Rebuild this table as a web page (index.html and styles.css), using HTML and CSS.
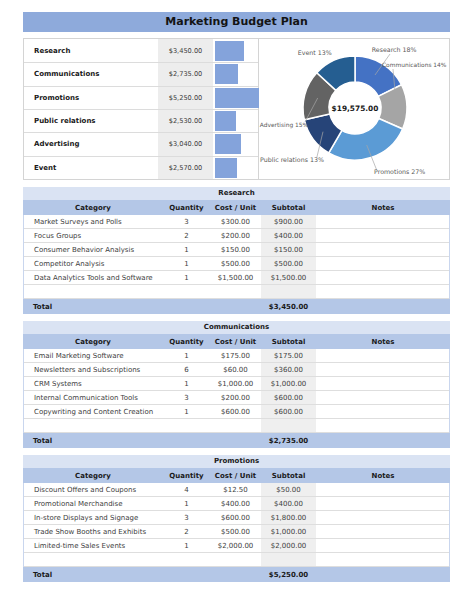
FILE: index.html
```html
<!DOCTYPE html>
<html lang="en">
<head>
<meta charset="utf-8">
<title>Marketing Budget Plan</title>
<link rel="stylesheet" href="styles.css">
</head>
<body>
<div class="page">
  <div class="title">Marketing Budget Plan</div>

  <div class="summary">
    <div class="sum-table">
      <div class="sum-row"><div class="sum-label">Research</div><div class="sum-amt">$3,450.00</div><div class="sum-barcell"><div class="bar" style="width:28.9px"></div></div></div>
      <div class="sum-row"><div class="sum-label">Communications</div><div class="sum-amt">$2,735.00</div><div class="sum-barcell"><div class="bar" style="width:22.9px"></div></div></div>
      <div class="sum-row"><div class="sum-label">Promotions</div><div class="sum-amt">$5,250.00</div><div class="sum-barcell"><div class="bar" style="width:44px"></div></div></div>
      <div class="sum-row"><div class="sum-label">Public relations</div><div class="sum-amt">$2,530.00</div><div class="sum-barcell"><div class="bar" style="width:21.2px"></div></div></div>
      <div class="sum-row"><div class="sum-label">Advertising</div><div class="sum-amt">$3,040.00</div><div class="sum-barcell"><div class="bar" style="width:25.5px"></div></div></div>
      <div class="sum-row"><div class="sum-label">Event</div><div class="sum-amt">$2,570.00</div><div class="sum-barcell"><div class="bar" style="width:21.5px"></div></div></div>
    </div>
    <div class="chart">
      <svg class="donut" width="190" height="140" viewBox="0 0 190 140">
        <g stroke="#ffffff" stroke-width="1.5">
          <path fill="#4472c4" d="M96 17 A52 52 0 0 1 142.52 45.76 L119.26 57.38 A26 26 0 0 0 96 43 Z"/>
          <path fill="#a5a5a5" d="M142.52 45.76 A52 52 0 0 1 143.6 89.94 L119.8 79.47 A26 26 0 0 0 119.26 57.38 Z"/>
          <path fill="#5b9bd5" d="M143.6 89.94 A52 52 0 0 1 69.77 113.9 L82.88 91.45 A26 26 0 0 0 119.8 79.47 Z"/>
          <path fill="#264478" d="M69.77 113.9 A52 52 0 0 1 45.37 80.85 L70.68 74.92 A26 26 0 0 0 82.88 91.45 Z"/>
          <path fill="#636363" d="M45.37 80.85 A52 52 0 0 1 57.81 33.71 L76.9 51.36 A26 26 0 0 0 70.68 74.92 Z"/>
          <path fill="#255e91" d="M57.81 33.71 A52 52 0 0 1 96 17 L96 43 A26 26 0 0 0 76.9 51.36 Z"/>
        </g>
        <g stroke="#a6a6a6" stroke-width="0.7" fill="none">
          <line x1="131" y1="15" x2="116" y2="36"/>
          <line x1="134" y1="30" x2="136" y2="52"/>
          <line x1="46" y1="83" x2="58.7" y2="59"/>
          <line x1="57.7" y1="119" x2="64" y2="92.7"/>
          <line x1="117.7" y1="131" x2="107.7" y2="106"/>
        </g>
        <text class="center-total" x="96" y="72" text-anchor="middle">$19,575.00</text>
        <g class="lbl">
          <text x="38.7" y="15.6">Event 13%</text>
          <text x="112.7" y="13.3">Research 18%</text>
          <text class="lbl-narrow" x="123" y="28.3">Communications 14%</text>
          <text class="lbl-narrow" x="0.8" y="87.6">Advertising 15%</text>
          <text x="1" y="123.3">Public relations 13%</text>
          <text x="115" y="135">Promotions 27%</text>
        </g>
      </svg>
    </div>
  </div>

  <div class="section">
    <div class="band">Research</div>
    <div class="row head"><div>Category</div><div>Quantity</div><div>Cost / Unit</div><div>Subtotal</div><div>Notes</div></div>
    <div class="rows">
      <div class="row data"><div class="cat">Market Surveys and Polls</div><div>3</div><div>$300.00</div><div class="sub">$900.00</div><div></div></div>
      <div class="row data"><div class="cat">Focus Groups</div><div>2</div><div>$200.00</div><div class="sub">$400.00</div><div></div></div>
      <div class="row data"><div class="cat">Consumer Behavior Analysis</div><div>1</div><div>$150.00</div><div class="sub">$150.00</div><div></div></div>
      <div class="row data"><div class="cat">Competitor Analysis</div><div>1</div><div>$500.00</div><div class="sub">$500.00</div><div></div></div>
      <div class="row data"><div class="cat">Data Analytics Tools and Software</div><div>1</div><div>$1,500.00</div><div class="sub">$1,500.00</div><div></div></div>
      <div class="row data"><div class="cat"></div><div></div><div></div><div class="sub"></div><div></div></div>
    </div>
    <div class="row total"><div class="cat">Total</div><div></div><div></div><div>$3,450.00</div><div></div></div>
  </div>

  <div class="section">
    <div class="band">Communications</div>
    <div class="row head"><div>Category</div><div>Quantity</div><div>Cost / Unit</div><div>Subtotal</div><div>Notes</div></div>
    <div class="rows">
      <div class="row data"><div class="cat">Email Marketing Software</div><div>1</div><div>$175.00</div><div class="sub">$175.00</div><div></div></div>
      <div class="row data"><div class="cat">Newsletters and Subscriptions</div><div>6</div><div>$60.00</div><div class="sub">$360.00</div><div></div></div>
      <div class="row data"><div class="cat">CRM Systems</div><div>1</div><div>$1,000.00</div><div class="sub">$1,000.00</div><div></div></div>
      <div class="row data"><div class="cat">Internal Communication Tools</div><div>3</div><div>$200.00</div><div class="sub">$600.00</div><div></div></div>
      <div class="row data"><div class="cat">Copywriting and Content Creation</div><div>1</div><div>$600.00</div><div class="sub">$600.00</div><div></div></div>
      <div class="row data"><div class="cat"></div><div></div><div></div><div class="sub"></div><div></div></div>
    </div>
    <div class="row total"><div class="cat">Total</div><div></div><div></div><div>$2,735.00</div><div></div></div>
  </div>

  <div class="section">
    <div class="band">Promotions</div>
    <div class="row head"><div>Category</div><div>Quantity</div><div>Cost / Unit</div><div>Subtotal</div><div>Notes</div></div>
    <div class="rows">
      <div class="row data"><div class="cat">Discount Offers and Coupons</div><div>4</div><div>$12.50</div><div class="sub">$50.00</div><div></div></div>
      <div class="row data"><div class="cat">Promotional Merchandise</div><div>1</div><div>$400.00</div><div class="sub">$400.00</div><div></div></div>
      <div class="row data"><div class="cat">In-store Displays and Signage</div><div>3</div><div>$600.00</div><div class="sub">$1,800.00</div><div></div></div>
      <div class="row data"><div class="cat">Trade Show Booths and Exhibits</div><div>2</div><div>$500.00</div><div class="sub">$1,000.00</div><div></div></div>
      <div class="row data"><div class="cat">Limited-time Sales Events</div><div>1</div><div>$2,000.00</div><div class="sub">$2,000.00</div><div></div></div>
      <div class="row data"><div class="cat"></div><div></div><div></div><div class="sub"></div><div></div></div>
    </div>
    <div class="row total"><div class="cat">Total</div><div></div><div></div><div>$5,250.00</div><div></div></div>
  </div>
</div>
</body>
</html>
```

FILE: styles.css
```css
html, body {
  margin: 0;
  padding: 0;
  background: #ffffff;
}

body {
  font-family: "DejaVu Sans", Verdana, sans-serif;
  color: #404040;
}

.page {
  width: 427px;
  margin: 0 0 0 23px;
  padding-top: 12px;
}

.title {
  height: 20px;
  line-height: 20px;
  background: #8eaadb;
  text-align: center;
  font-weight: bold;
  font-size: 11px;
  color: #141414;
  margin-bottom: 6px;
}

/* Summary */
.summary {
  display: flex;
  height: 142px;
}

.sum-table {
  width: 236px;
  box-sizing: border-box;
  border: 1px solid #d4d4d4;
  display: grid;
  grid-template-rows: repeat(6, 1fr);
}

.sum-row {
  display: grid;
  grid-template-columns: 134px 55px 45px;
  border-top: 1px solid #dcdcdc;
}

.sum-row:first-child {
  border-top: none;
}

.sum-label {
  display: flex;
  align-items: center;
  padding-left: 10px;
  font-weight: bold;
  font-size: 7px;
  color: #1a1a1a;
}

.sum-amt {
  display: flex;
  align-items: center;
  justify-content: center;
  background: #ededed;
  font-size: 6.6px;
  color: #404040;
}

.sum-barcell {
  display: flex;
  align-items: center;
  padding-left: 2px;
}

.bar {
  height: 20px;
  background: #84a3db;
  flex: none;
}

.chart {
  width: 191px;
  box-sizing: border-box;
  border: 1px solid #d4d4d4;
  border-left: none;
  overflow: hidden;
}

.donut {
  display: block;
  overflow: hidden;
}

.center-total {
  font-family: "DejaVu Sans", Verdana, sans-serif;
  font-weight: bold;
  font-size: 7.4px;
  fill: #1a1a1a;
}

.lbl text {
  font-family: "DejaVu Sans", Verdana, sans-serif;
  font-size: 6.3px;
  fill: #595959;
}

.lbl .lbl-narrow {
  font-size: 5.9px;
}

/* Sections */
.section {
  margin-top: 7px;
}

.band {
  height: 13px;
  line-height: 13px;
  background: #dae3f3;
  text-align: center;
  font-weight: bold;
  font-size: 7px;
  color: #1a1a1a;
}

.row {
  display: grid;
  grid-template-columns: 140px 47px 51px 55px 1fr;
  font-size: 7px;
}

.row > div {
  display: flex;
  align-items: center;
  justify-content: center;
  white-space: nowrap;
}

.row > .cat {
  justify-content: flex-start;
  padding-left: 10px;
}

.head {
  height: 15px;
  background: #b4c7e7;
  font-weight: bold;
  color: #1a1a1a;
}

.rows {
  border-left: 1px solid #c9d6ee;
  border-right: 1px solid #c9d6ee;
}

.rows .row {
  grid-template-columns: 139px 47px 51px 55px 1fr;
}

.data {
  height: 14px;
  box-sizing: border-box;
  border-bottom: 1px solid #dedede;
  background: #ffffff;
  color: #404040;
}

.data > .sub {
  background: #efefef;
}

.total {
  height: 15px;
  background: #b4c7e7;
  font-weight: bold;
  color: #1a1a1a;
}
```
